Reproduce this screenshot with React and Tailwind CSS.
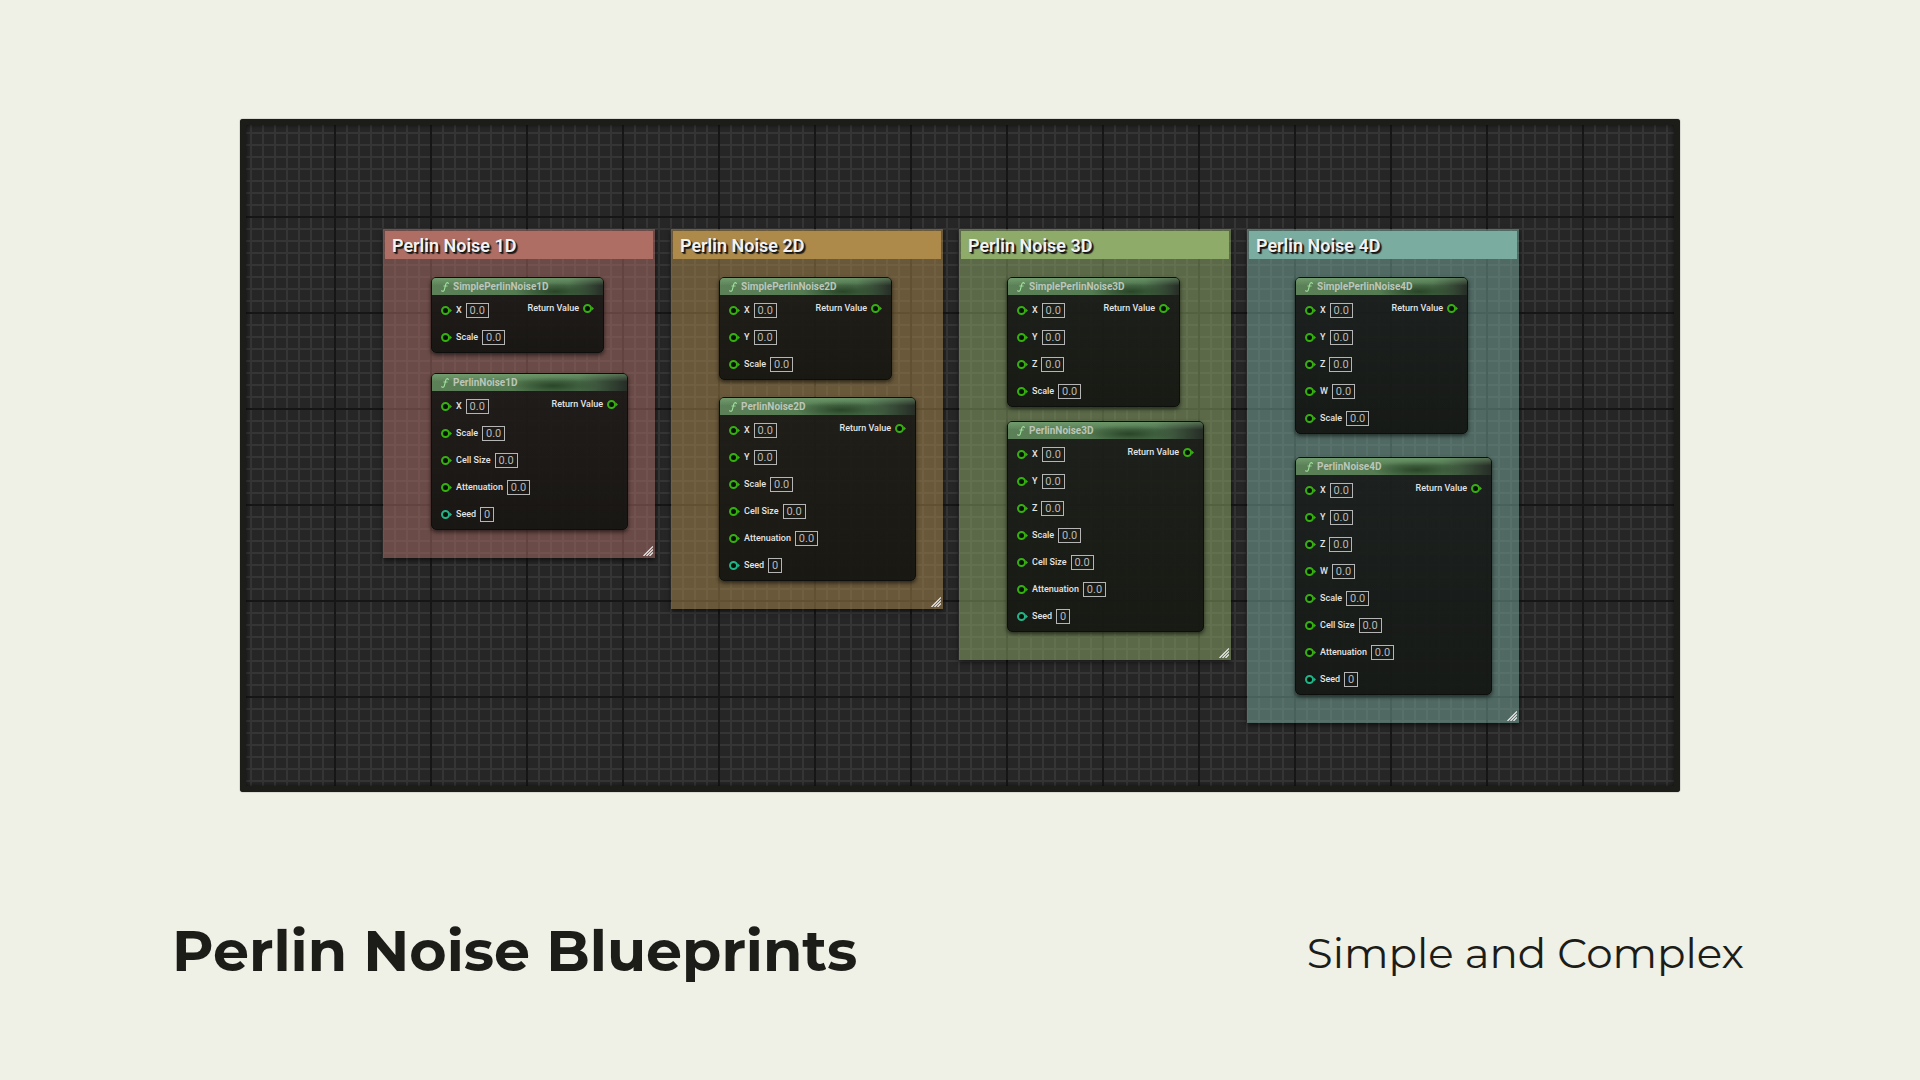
import React, { useId } from 'react';
import clsx from 'clsx';

const BOARDS = [
  {
    name: '1D',
    axes: ['X'],
    title: 'bg-[#ae6e64]',
    body: 'bg-[#ae7068]/50',
    gap: 'gap-5',
  },
  {
    name: '2D',
    axes: ['X', 'Y'],
    title: 'bg-[#ad8a4a]',
    body: 'bg-[#ab8a4e]/50',
    gap: 'gap-[17px]',
  },
  {
    name: '3D',
    axes: ['X', 'Y', 'Z'],
    title: 'bg-[#8fab69]',
    body: 'bg-[#8fab69]/50',
    gap: 'gap-3.5',
  },
  {
    name: '4D',
    axes: ['X', 'Y', 'Z', 'W'],
    title: 'bg-[#7aaca0]',
    body: 'bg-[#7aaca0]/50',
    gap: 'gap-[23px]',
  },
];

const Pin = ({ integer }) => (
  <svg
    className={clsx('h-[9px] w-[11px] shrink-0', integer ? 'text-[#22b488]' : 'text-[#35b010]')}
    viewBox="0 0 11 9"
    aria-hidden="true"
  >
    <circle cx="4.5" cy="4.5" r="3.5" fill="#071004" stroke="currentColor" strokeWidth="2" />
    <path d="M8.6 2.3 L11 4.5 L8.6 6.7 Z" fill="currentColor" />
  </svg>
);

const FunctionIcon = () => (
  <svg className="h-2.5 w-2 shrink-0" viewBox="0 0 8 10" fill="none" stroke="#9fe39a" strokeLinecap="round" aria-hidden="true">
    <path d="M7.4 1.3 C6.4 0.2 5.2 0.6 4.8 2.2 L3.4 7.6 C3 9.2 1.8 9.7 0.6 8.8" strokeWidth="1.1" />
    <path d="M2.8 4 H6.2" strokeWidth="0.9" />
  </svg>
);

const InputRow = ({ label, integer }) => {
  const id = useId();

  return (
    <div className="flex h-[27px] items-center">
      <Pin integer={integer} />
      <label htmlFor={id} className="mr-1 ml-1 text-[9px] font-medium text-[#e4e4e4]">
        {label}
      </label>
      <input
        id={id}
        type="text"
        defaultValue={integer ? '0' : '0.0'}
        className={clsx(
          'h-[15px] border border-[#b5b5b5] bg-transparent p-0 text-center text-[11px] leading-[13px] text-[#b9b9b9] outline-none',
          integer ? 'w-3.5' : 'w-[23px]'
        )}
      />
    </div>
  );
};

const Node = ({ title, inputs, wide }) => (
  <section
    className={clsx(
      'overflow-hidden rounded-[5px] border border-[#0c0f0b] bg-linear-to-b from-[#131413]/85 to-[#10110e]/90 shadow-[0_2px_4px_rgba(0,0,0,0.6)]',
      wide ? 'w-[197px]' : 'w-[173px]'
    )}
  >
    <h3
      className={clsx(
        'flex h-[17px] items-center gap-1 pl-[9px] text-[10px] leading-none font-bold text-[#bcc6b9]',
        wide
          ? 'bg-[linear-gradient(to_bottom,rgba(140,190,135,0.45),rgba(90,130,85,0)_45%),radial-gradient(ellipse_45px_9px_at_62%_70%,rgba(32,58,30,0.8),transparent),linear-gradient(to_right,#5c8159_0%,#557b53_45%,#4c6f4c_75%,#262d26_100%)]'
          : 'bg-[linear-gradient(to_bottom,rgba(140,190,135,0.45),rgba(90,130,85,0)_45%),radial-gradient(ellipse_40px_9px_at_72%_80%,rgba(32,58,30,0.8),transparent),linear-gradient(to_right,#5c8159_0%,#557b53_50%,#4c6f4c_80%,#262d26_100%)]'
      )}
    >
      <FunctionIcon />
      {title}
    </h3>
    <div className="flex justify-between pr-[9px] pb-px pl-[9px]">
      <div className="pt-0.5">
        {inputs.map((label) => (
          <InputRow key={label} label={label} integer={label === 'Seed'} />
        ))}
      </div>
      <div className="flex h-[27px] items-center gap-1 text-[9px] font-medium text-[#e4e4e4]">
        Return Value
        <Pin />
      </div>
    </div>
  </section>
);

const Board = ({ board }) => (
  <article className={clsx('relative w-68 p-0.5 pb-7 shadow-[0_2px_5px_rgba(0,0,0,0.6)]', board.body)}>
    <h2
      className={clsx(
        'flex h-7 items-center px-[7px] pt-0.5 text-lg leading-none font-semibold text-[#f2f2f2] [text-shadow:1px_1px_1px_#111,2px_2px_1px_#222]',
        board.title
      )}
    >
      Perlin Noise {board.name}
    </h2>
    <div className={clsx('flex flex-col pt-[18px] pl-[46px]', board.gap)}>
      <Node title={`SimplePerlinNoise${board.name}`} inputs={[...board.axes, 'Scale']} />
      <Node
        title={`PerlinNoise${board.name}`}
        inputs={[...board.axes, 'Scale', 'Cell Size', 'Attenuation', 'Seed']}
        wide
      />
    </div>
    <svg
      className="absolute right-0.5 bottom-0.5 h-2.5 w-2.5"
      viewBox="0 0 10 10"
      stroke="#f0f0f0"
      strokeWidth="1.2"
      aria-hidden="true"
    >
      <path d="M0.5 10 L10 0.5 M3.5 10 L10 3.5 M6.5 10 L10 6.5" />
    </svg>
  </article>
);

const Canvas = () => (
  <div className="rounded-[3px] border-6 border-[#1c1c18] bg-[#262626] bg-[linear-gradient(to_right,#161616_2px,transparent_2px),linear-gradient(to_bottom,#161616_2px,transparent_2px),linear-gradient(to_right,#353535_2px,transparent_2px),linear-gradient(to_bottom,#353535_2px,transparent_2px)] bg-size-[96px_96px,96px_96px,12px_12px,12px_12px] bg-position-[88px_91px] font-[Roboto,sans-serif] shadow-[0_0_1px_#1c1c18]">
    <div className="flex items-start gap-4 pt-[104px] pb-[63px] pl-[137px] shadow-[inset_0_0_5px_rgba(0,0,0,0.6)]">
      {BOARDS.map((board) => (
        <Board key={board.name} board={board} />
      ))}
    </div>
  </div>
);

export default function App() {
  return (
    <main className="min-h-screen bg-[#eff0e6] pt-[119px] text-[#1c1c18]">
      <div className="px-60">
        <Canvas />
      </div>
      <footer className="flex items-start justify-between pt-[124px] pr-44 pl-43 font-[Montserrat,Inter,sans-serif]">
        <h1 className="text-[57px] leading-[70px] font-bold">Perlin Noise Blueprints</h1>
        <p className="text-[42px] leading-[74px] font-normal">Simple and Complex</p>
      </footer>
    </main>
  );
}
